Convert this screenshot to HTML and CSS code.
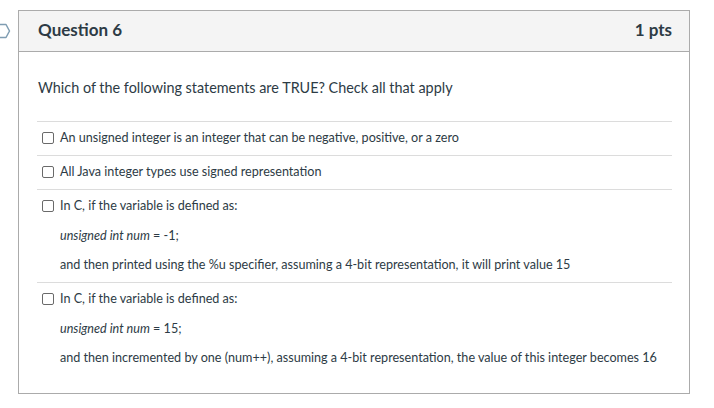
FILE: index.html
```html
<!DOCTYPE html>
<html>
<head>
<meta charset="utf-8">
<link rel="stylesheet" href="styles.css">
</head>
<body>
<div class="page">
  <div class="gutter">
    <svg class="flag" width="24" height="16" viewBox="0 0 24 16">
      <path d="M1 1.5 H18 L21.5 8 L18 14.5 H1" fill="none" stroke="#7f9db2" stroke-width="1.5" stroke-linejoin="round"/>
    </svg>
  </div>
  <div class="card">
    <div class="card-header">
      <span class="q-title">Question 6</span>
      <span class="q-pts">1 pts</span>
    </div>
    <div class="card-body">
      <p class="q-text">Which of the following statements are TRUE? Check all that apply</p>
      <div class="answers">
        <div class="answer">
          <span class="box"></span>
          <div class="a-text"><p>An unsigned integer is an integer that can be negative, positive, or a zero</p></div>
        </div>
        <div class="answer">
          <span class="box"></span>
          <div class="a-text"><p>All Java integer types use signed representation</p></div>
        </div>
        <div class="answer">
          <span class="box"></span>
          <div class="a-text">
            <p>In C, if the variable is defined as:</p>
            <p><em>unsigned int num</em> = -1;</p>
            <p>and then printed using the %u specifier, assuming a 4-bit representation, it will print value 15</p>
          </div>
        </div>
        <div class="answer">
          <span class="box"></span>
          <div class="a-text">
            <p>In C, if the variable is defined as:</p>
            <p><em>unsigned int num</em> = 15;</p>
            <p>and then incremented by one (num++), assuming a 4-bit representation, the value of this integer becomes 16</p>
          </div>
        </div>
      </div>
    </div>
  </div>
</div>
</body>
</html>
```
FILE: styles.css
```css
* { box-sizing: border-box; }
html, body { margin: 0; padding: 0; background: #fff; }
body {
  font-family: Lato, "Noto Sans", sans-serif;
  color: #2d3b45;
}
.page {
  display: flex;
  align-items: flex-start;
  padding-top: 10px;
}
.gutter {
  width: 18px;
  flex: none;
  position: relative;
}
.flag {
  position: absolute;
  left: -12px;
  top: 13px;
}
.card {
  width: 672px;
  border: 1px solid #ababab;
}
.card-header {
  height: 41px;
  background: #f4f4f4;
  border-bottom: 1px solid #ababab;
  display: flex;
  align-items: center;
  justify-content: space-between;
  padding: 0 17px 3px 19px;
  font-weight: 700;
  font-size: 17px;
}
.card-body {
  padding: 26px 17px 18px 18px;
}
.q-text {
  margin: 0 0 23px 1px;
  font-size: 14.4px;
  line-height: 20px;
}
.answer {
  display: flex;
  align-items: flex-start;
  border-top: 1px solid #dcdcdc;
  padding: 6px 0 8px 5px;
}
.box {
  flex: none;
  width: 12px;
  height: 12px;
  border: 1px solid #6a6a6a;
  border-radius: 2px;
  margin-top: 4px;
  margin-right: 6px;
  background: #fff;
}
.a-text {
  font-size: 12.6px;
  line-height: 19px;
}
.a-text p {
  margin: 0 0 10.5px 0;
}
.a-text p:last-child { margin-bottom: 0; }
.a-text em { font-style: italic; }
```
